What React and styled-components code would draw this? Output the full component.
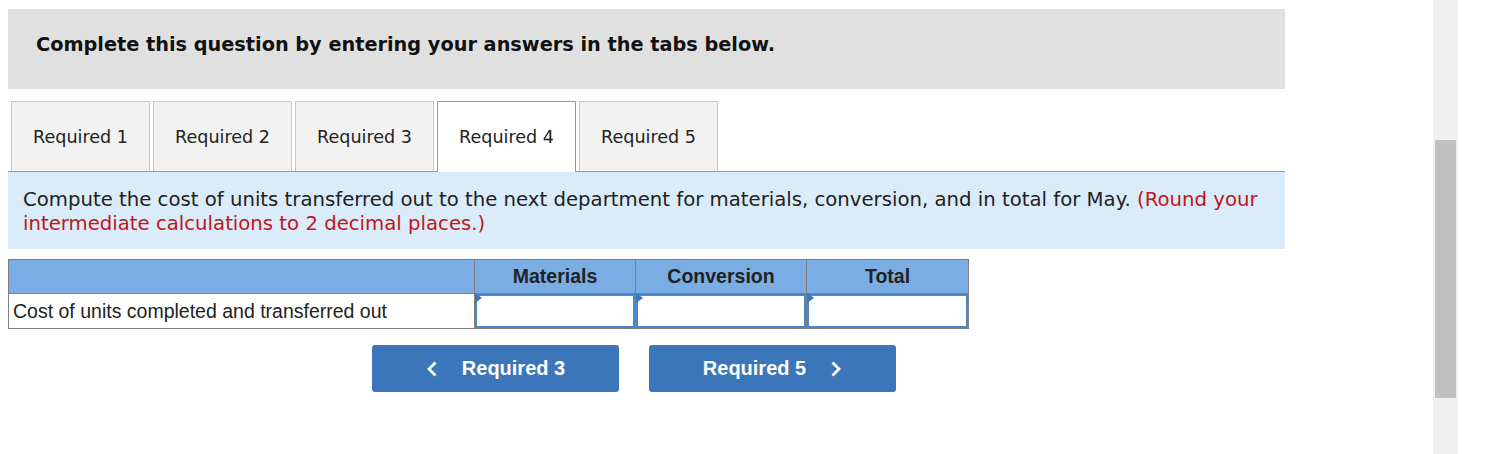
import styled, { createGlobalStyle } from "styled-components";
import { useState } from "react";

const GlobalStyle = createGlobalStyle`
    html, body {
        margin: 0;
        padding: 0;
        background: #fff;
        overflow: hidden;
    }
`;

const Page = styled.div`
    display: flex;
    height: 454px;
    width: 1495px;
`;

const Content = styled.div`
    width: 1277px;
    padding: 9px 148px 0 8px;
`;

const ScrollTrack = styled.div`
    width: 25px;
    height: 454px;
    background: #f0f0f0;
    padding-top: 140px;
    box-sizing: border-box;
    margin-right: 37px;
`;

const ScrollThumb = styled.div`
    margin-left: 2px;
    width: 21px;
    height: 258px;
    background: #c1c1c1;
`;

const Banner = styled.div`
    height: 80px;
    box-sizing: border-box;
    background: #e0e0e0;
    display: flex;
    align-items: center;
    padding: 0 0 9px 28px;
    font-family: "DejaVu Sans", Verdana, sans-serif;
    font-weight: 700;
    font-size: 19.3px;
    color: #111;
`;

const TabBar = styled.div`
    display: flex;
    gap: 3px;
    margin-top: 12px;
    padding-left: 3px;
    border-bottom: 1px solid #999;
`;

const Tab = styled.div`
    width: 137px;
    height: 69px;
    display: flex;
    align-items: center;
    justify-content: center;
    font-family: "DejaVu Sans", Verdana, sans-serif;
    font-size: 17.6px;
    color: #222;
    background: ${p => (p.$active ? "#fff" : "#f2f2f2")};
    border: 1px solid ${p => (p.$active ? "#999" : "#c8c8c8")};
    border-bottom: none;
    margin-bottom: ${p => (p.$active ? "-1px" : "0")};
    padding-bottom: ${p => (p.$active ? "1px" : "0")};
    cursor: pointer;
`;

const Instructions = styled.div`
    background: #daebf9;
    height: 77px;
    box-sizing: border-box;
    padding: 16px 15px 0;
    font-family: "DejaVu Sans", Verdana, sans-serif;
    font-size: 19.7px;
    line-height: 24px;
    color: #222;
`;

const Note = styled.span`
    color: #c0161c;
`;

const Table = styled.div`
    margin-top: 10px;
    width: 960px;
    display: grid;
    grid-template-columns: 466px 161px 171px 162px;
    border: 1px solid #808080;
    border-right: none;
    border-bottom: none;
    font-family: "Liberation Sans", Arial, sans-serif;
    font-size: 19.5px;
    color: #222;
`;

const HeadCell = styled.div`
    height: 33px;
    background: #7aade3;
    border-right: 1px solid #808080;
    border-bottom: 1px solid #808080;
    display: flex;
    align-items: center;
    justify-content: center;
    font-weight: 700;
`;

const LabelCell = styled.div`
    height: 34px;
    border-right: 1px solid #808080;
    border-bottom: 1px solid #808080;
    display: flex;
    align-items: center;
    padding-left: 4px;
    background: #fff;
`;

const InputCell = styled.div`
    position: relative;
    height: 34px;
    border-right: 1px solid #808080;
    border-bottom: 1px solid #808080;
    display: flex;
    &::before {
        content: "";
        position: absolute;
        left: 0;
        top: 0;
        border-top: 5px solid transparent;
        border-bottom: 5px solid transparent;
        border-left: 7px solid #3b76ba;
        transform: translateY(-1px);
        pointer-events: none;
    }
`;

const Input = styled.input`
    flex: 1;
    min-width: 0;
    border: 2px solid #4a86c8;
    margin: 0;
    padding: 0 4px;
    font-family: "Liberation Sans", Arial, sans-serif;
    font-size: 18px;
    text-align: right;
    outline: none;
`;

const Nav = styled.div`
    display: flex;
    gap: 30px;
    margin-top: 16px;
    padding-left: 364px;
`;

const NavButton = styled.button`
    width: 247px;
    height: 47px;
    background: #3b76ba;
    border: none;
    border-radius: 3px;
    color: #fff;
    font-family: "Liberation Sans", Arial, sans-serif;
    font-weight: 700;
    font-size: 20px;
    display: flex;
    align-items: center;
    justify-content: center;
    gap: 24px;
    cursor: pointer;
`;

const Chevron = ({ dir }) => (
    <svg width="12" height="18" viewBox="0 0 12 18">
        <path
            d={dir === "left" ? "M9.5 2.5 L3 9 L9.5 15.5" : "M2.5 2.5 L9 9 L2.5 15.5"}
            fill="none"
            stroke="#fff"
            strokeWidth="2.8"
        />
    </svg>
);

const tabs = ["Required 1", "Required 2", "Required 3", "Required 4", "Required 5"];
const columns = ["Materials", "Conversion", "Total"];

export default function App() {
    const [active, setActive] = useState(3);

    return (
        <Page>
            <GlobalStyle />
            <Content>
                <Banner>Complete this question by entering your answers in the tabs below.</Banner>
                <TabBar>
                    {tabs.map((t, i) => (
                        <Tab key={t} $active={i === active} onClick={() => setActive(i)}>
                            {t}
                        </Tab>
                    ))}
                </TabBar>
                <Instructions>
                    Compute the cost of units transferred out to the next department for materials,
                    conversion, and in total for May. <Note>(Round your intermediate calculations to 2 decimal places.)</Note>
                </Instructions>
                <Table>
                    <HeadCell />
                    {columns.map(c => (
                        <HeadCell key={c}>{c}</HeadCell>
                    ))}
                    <LabelCell>Cost of units completed and transferred out</LabelCell>
                    {columns.map(c => (
                        <InputCell key={c}>
                            <Input type="text" />
                        </InputCell>
                    ))}
                </Table>
                <Nav>
                    <NavButton onClick={() => setActive(2)}>
                        <Chevron dir="left" />
                        Required 3
                    </NavButton>
                    <NavButton onClick={() => setActive(4)}>
                        Required 5
                        <Chevron dir="right" />
                    </NavButton>
                </Nav>
            </Content>
            <ScrollTrack>
                <ScrollThumb />
            </ScrollTrack>
        </Page>
    );
}
